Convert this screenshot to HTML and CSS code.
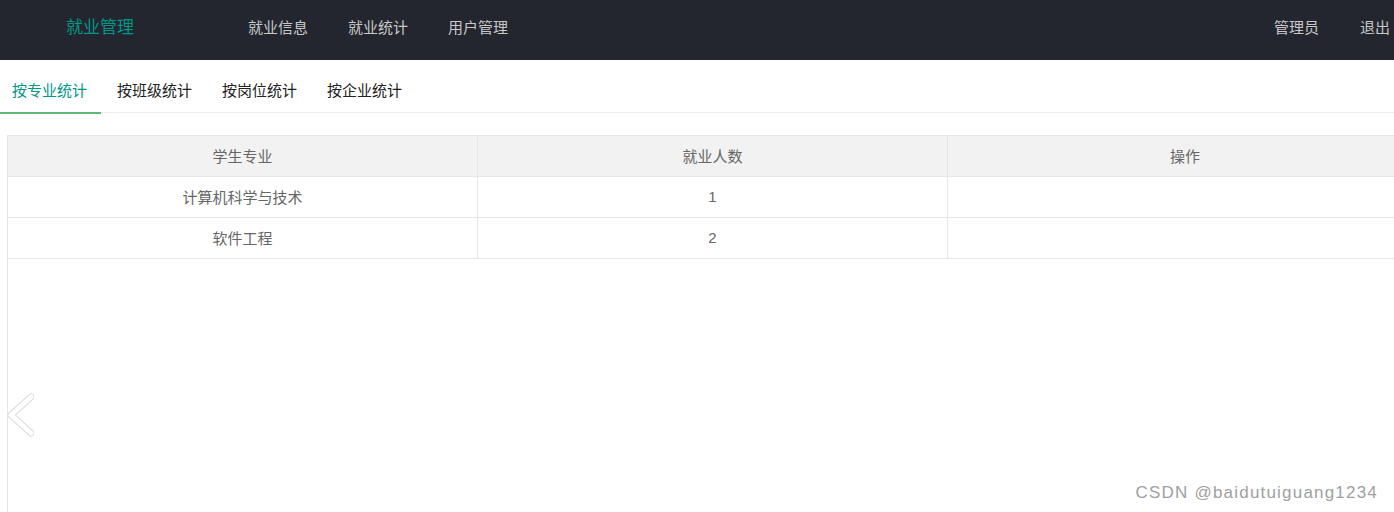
FILE: index.html
```html
<!DOCTYPE html>
<html lang="zh-CN">
<head>
    <meta charset="UTF-8">
    <meta name="viewport" content="width=device-width, initial-scale=1.0">
    <title>就业管理</title>
    <link rel="stylesheet" href="styles.css">
</head>
<body>
    <div class="layout">
        <div class="header">
            <div class="logo">就业管理</div>
            <ul class="nav nav-left">
                <li><a href="#">就业信息</a></li>
                <li><a href="#">就业统计</a></li>
                <li><a href="#">用户管理</a></li>
            </ul>
            <ul class="nav nav-right">
                <li><a href="#">管理员</a></li>
                <li><a href="#">退出</a></li>
            </ul>
        </div>

        <div class="tab">
            <ul class="tab-title">
                <li class="this">按专业统计</li>
                <li>按班级统计</li>
                <li>按岗位统计</li>
                <li>按企业统计</li>
            </ul>
        </div>

        <div class="table-box">
            <table class="data-table">
                <thead>
                    <tr>
                        <th>学生专业</th>
                        <th>就业人数</th>
                        <th>操作</th>
                    </tr>
                </thead>
                <tbody>
                    <tr>
                        <td>计算机科学与技术</td>
                        <td>1</td>
                        <td></td>
                    </tr>
                    <tr>
                        <td>软件工程</td>
                        <td>2</td>
                        <td></td>
                    </tr>
                </tbody>
            </table>
        </div>
    </div>

    <!-- carousel arrow, sits over the table area -->
    <svg class="arrow-prev" width="30" height="48" viewBox="0 0 30 48">
        <path d="M27 6 L7 24 L27 42" fill="none" stroke="#d9d9d9" stroke-width="7" stroke-linecap="round" stroke-linejoin="round"/>
        <path d="M27 6 L7 24 L27 42" fill="none" stroke="#ffffff" stroke-width="5" stroke-linecap="round" stroke-linejoin="round"/>
    </svg>

    <div class="watermark">CSDN @baidutuiguang1234</div>
</body>
</html>
```

FILE: styles.css
```css
html, body {
    margin: 0;
    padding: 0;
    overflow: hidden;
    background-color: #ffffff;
}
body {
    font-family: "Liberation Sans", "Noto Sans CJK SC", sans-serif;
    color: #666666;
    height: 512px;
    position: relative;
}
ul {
    list-style: none;
    margin: 0;
    padding: 0;
}
a {
    text-decoration: none;
}
.layout {
    width: 1420px;
}

/* top bar */
.header {
    display: flex;
    height: 60px;
    background-color: #23262e;
}
.logo {
    width: 200px;
    text-align: center;
    line-height: 56px;
    font-size: 17px;
    color: #009688;
}
.nav {
    display: flex;
}
.nav li a {
    display: block;
    padding: 0 20px;
    line-height: 56px;
    font-size: 15px;
    color: rgba(255, 255, 255, 0.75);
}
.nav-left {
    margin-left: 28px;
}
.nav-right {
    margin-left: auto;
    margin-right: 10px;
}
.nav-right li + li a {
    padding-left: 21px;
}

/* tabs */
.tab {
    margin: 11px 0 22px;
}
.tab-title {
    display: flex;
    height: 41px;
    border-bottom: 1px solid #eeeeee;
    width: 1394px;
}
.tab-title li {
    position: relative;
    padding: 0 18px 0 12px;
    line-height: 40px;
    font-size: 15px;
    color: #222222;
}
.tab-title li.this {
    color: #009688;
}
.tab-title li.this::after {
    content: "";
    position: absolute;
    left: 0;
    right: 4px;
    bottom: -2px;
    border-bottom: 2px solid #5fb878;
}

/* table */
.table-box {
    margin-left: 7px;
    height: 400px;
    border-left: 1px solid #e6e6e6;
}
.data-table {
    width: 1416px;
    border-collapse: collapse;
    table-layout: fixed;
    margin-left: -1px;
}
.data-table th,
.data-table td {
    box-sizing: border-box;
    height: 41px;
    padding: 0 15px 2px;
    border: 1px solid #e6e6e6;
    text-align: center;
    font-size: 15px;
    font-weight: normal;
    color: #666666;
}
.data-table th:nth-child(1),
.data-table th:nth-child(2) {
    width: 470px;
}
.data-table th {
    background-color: #f2f2f2;
}

.arrow-prev {
    position: absolute;
    left: 4px;
    top: 391px;
}
.watermark {
    position: absolute;
    right: 16px;
    bottom: 9px;
    font-size: 17px;
    letter-spacing: 1.2px;
    color: #a0a0a0;
    text-shadow: 1px 1px 0 #ffffff;
}
```
